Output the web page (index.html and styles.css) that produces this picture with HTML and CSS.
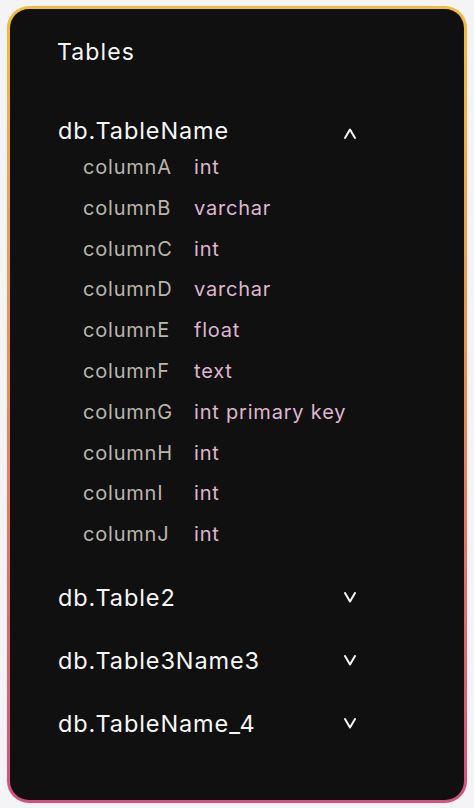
FILE: index.html
```html
<!DOCTYPE html>
<html lang="en">
<head>
    <meta charset="UTF-8">
    <meta name="viewport" content="width=device-width, initial-scale=1.0">
    <title>Tables</title>
    <link rel="stylesheet" href="styles.css">
</head>
<body>
    <div class="panel">
        <h1 class="panel-title">Tables</h1>

        <div class="table open">
            <div class="table-header">
                <span class="table-name">db.TableName</span>
                <svg class="chevron up" viewBox="0 0 12 11"><polyline points="1,10 6,1.5 11,10"/></svg>
            </div>
            <div class="columns">
                <div class="column"><span class="col-name">columnA</span><span class="col-type">int</span></div>
                <div class="column"><span class="col-name">columnB</span><span class="col-type">varchar</span></div>
                <div class="column"><span class="col-name">columnC</span><span class="col-type">int</span></div>
                <div class="column"><span class="col-name">columnD</span><span class="col-type">varchar</span></div>
                <div class="column"><span class="col-name">columnE</span><span class="col-type">float</span></div>
                <div class="column"><span class="col-name">columnF</span><span class="col-type">text</span></div>
                <div class="column"><span class="col-name">columnG</span><span class="col-type">int primary key</span></div>
                <div class="column"><span class="col-name">columnH</span><span class="col-type">int</span></div>
                <div class="column"><span class="col-name">columnI</span><span class="col-type">int</span></div>
                <div class="column"><span class="col-name">columnJ</span><span class="col-type">int</span></div>
            </div>
        </div>

        <div class="table">
            <div class="table-header">
                <span class="table-name">db.Table2</span>
                <svg class="chevron" viewBox="0 0 12 11"><polyline points="1,1 6,9.5 11,1"/></svg>
            </div>
        </div>

        <div class="table">
            <div class="table-header">
                <span class="table-name">db.Table3Name3</span>
                <svg class="chevron" viewBox="0 0 12 11"><polyline points="1,1 6,9.5 11,1"/></svg>
            </div>
        </div>

        <div class="table">
            <div class="table-header">
                <span class="table-name">db.TableName_4</span>
                <svg class="chevron" viewBox="0 0 12 11"><polyline points="1,1 6,9.5 11,1"/></svg>
            </div>
        </div>
    </div>
</body>
</html>
```

FILE: styles.css
```css
* {
    margin: 0;
    padding: 0;
    box-sizing: border-box;
    font-family: Inter, "Noto Sans", sans-serif;
}

body {
    background: #f4f4f6;
    padding: 6px 7px 5px;
}

/* Panel */
.panel {
    width: 460px;
    height: 797px;
    border: 3px solid transparent;
    border-radius: 22px;
    background:
        linear-gradient(#111011, #111011) padding-box,
        linear-gradient(180deg, #f2bc3e 0%, #ea8a55 50%, #d5507e 100%) border-box;
    padding: 28px 0 0 47px;
}

.panel-title {
    font-size: 23px;
    font-weight: 400;
    line-height: 30px;
    letter-spacing: 1.1px;
    color: #f6f6f6;
    margin-bottom: 49px;
}

/* Table sections */
.table {
    margin-bottom: 33px;
}

.table.open {
    margin-bottom: 28px;
}

.table-header {
    display: flex;
    justify-content: space-between;
    align-items: center;
    width: 299px;
    height: 30px;
    padding-left: 1px;
}

.table-name {
    font-size: 23.5px;
    letter-spacing: 0.9px;
    color: #f6f6f6;
    line-height: 30px;
}

.chevron {
    width: 12px;
    height: 11px;
    fill: none;
    stroke: #f6f6f6;
    stroke-width: 2;
    stroke-linecap: round;
    stroke-linejoin: round;
}

.chevron.up {
    margin-top: 5px;
}

.columns {
    padding-left: 26px;
    padding-top: 0.6px;
}

.column {
    display: flex;
    height: 40.8px;
    align-items: center;
    font-size: 20px;
    letter-spacing: 0.8px;
}

.col-name {
    width: 111px;
    color: #bab6ae;
}

.col-type {
    color: #dfb6cf;
}
```
